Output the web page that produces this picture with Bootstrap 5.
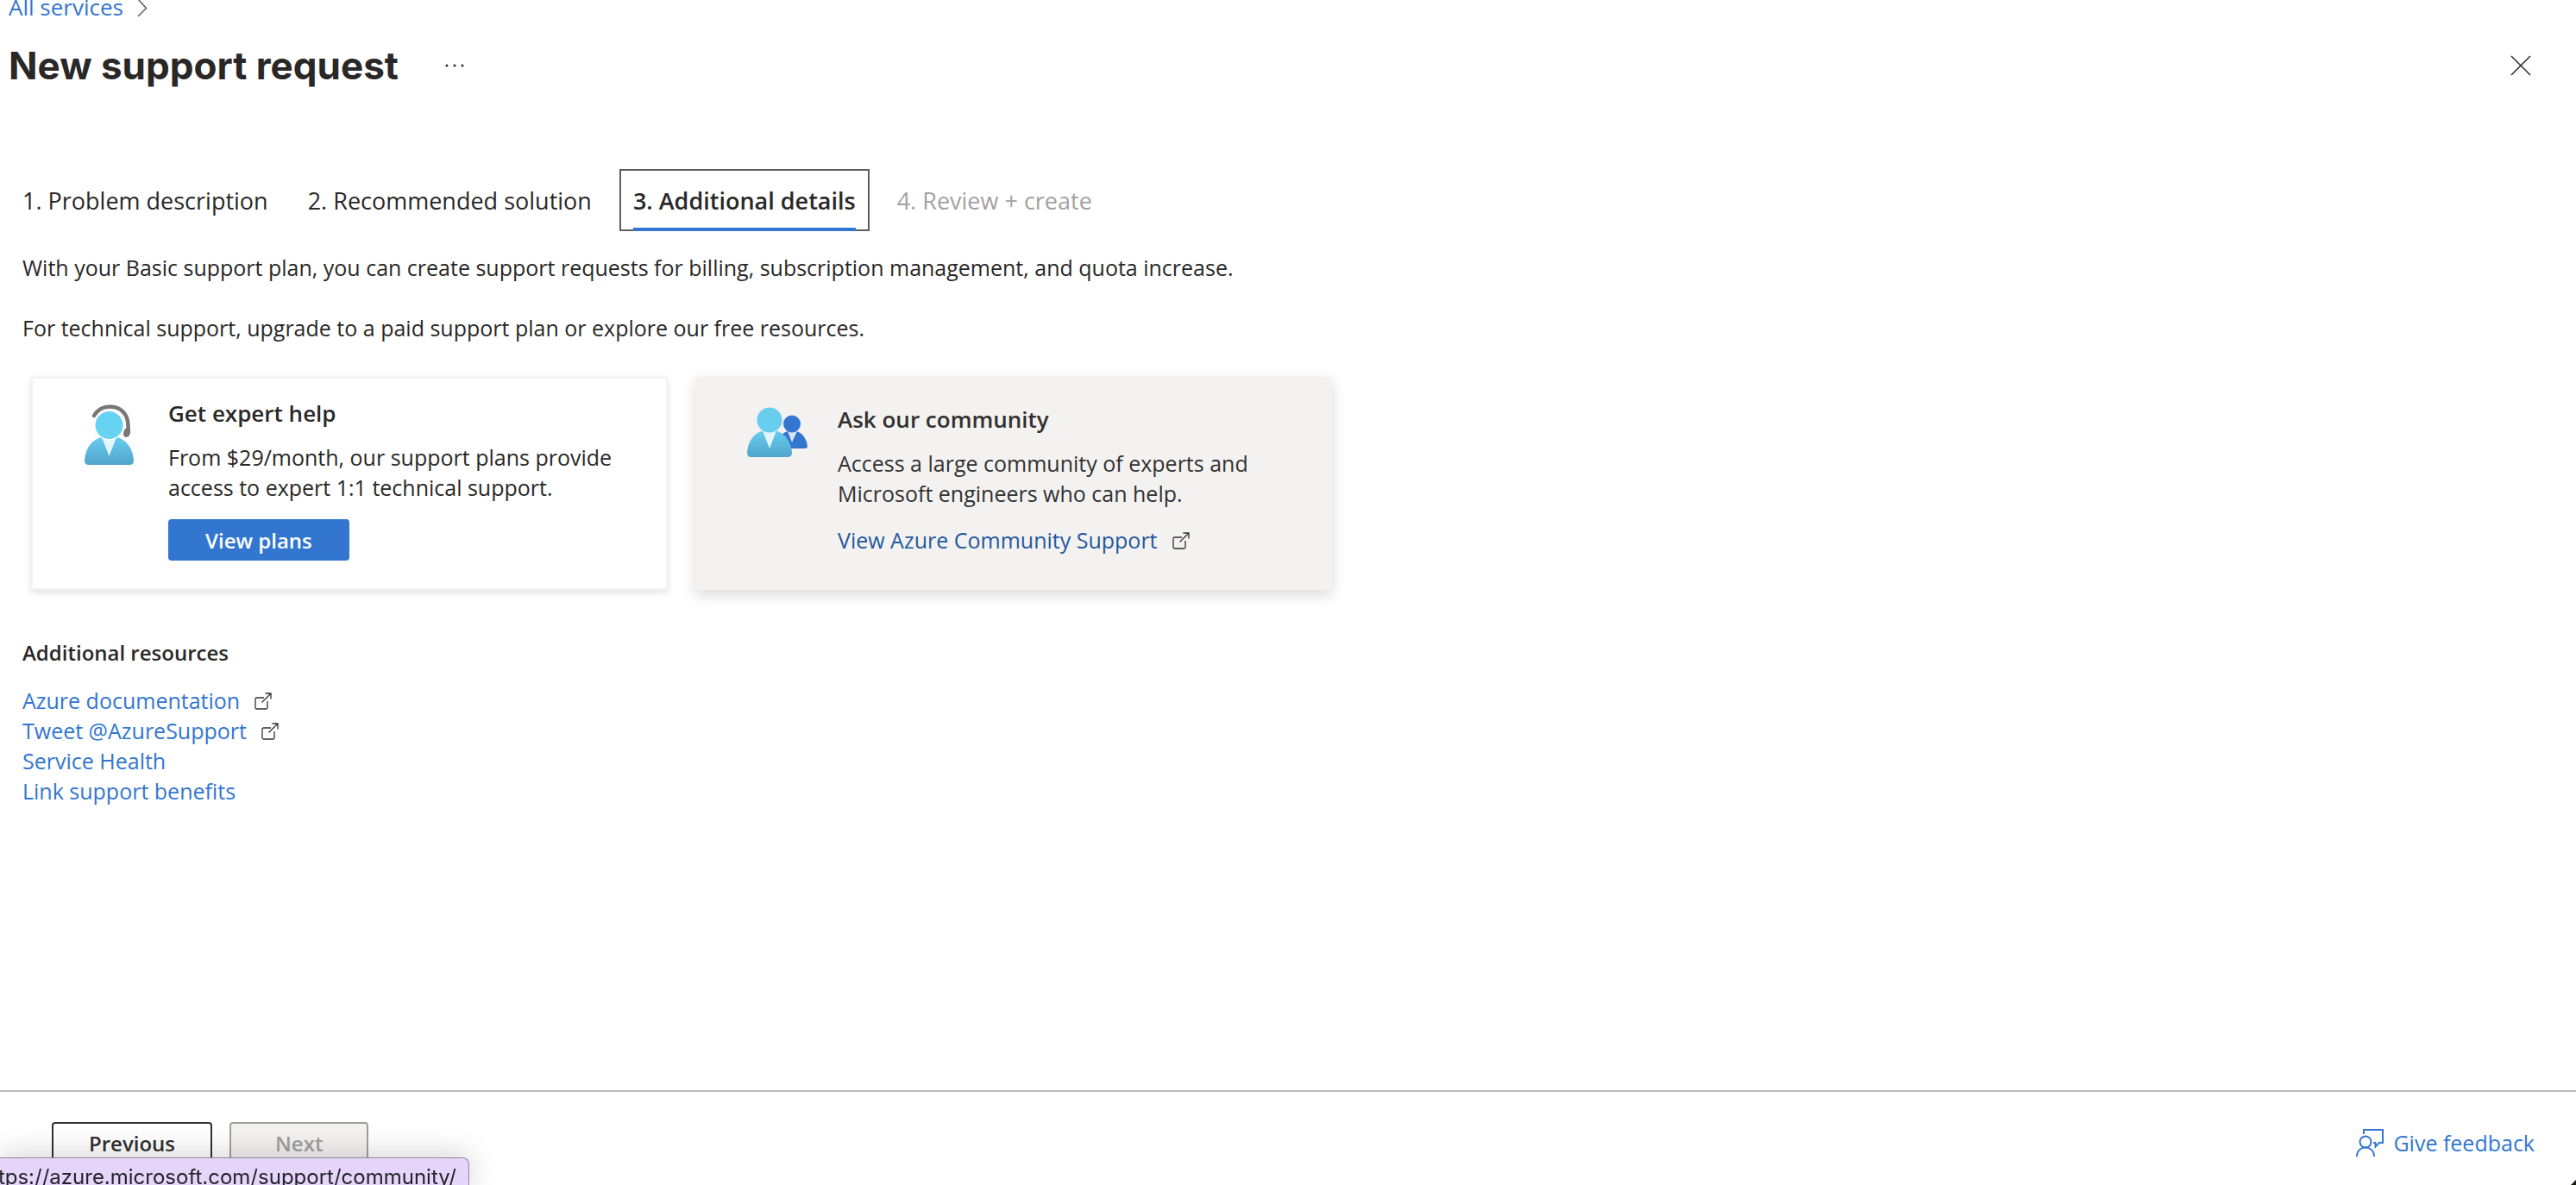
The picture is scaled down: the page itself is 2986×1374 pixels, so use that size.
<!DOCTYPE html>
<html lang="en">
<head>
<meta charset="utf-8">
<meta name="viewport" content="width=device-width, initial-scale=1">
<title>New support request</title>
<link href="https://cdn.jsdelivr.net/npm/bootstrap@5.3.0/dist/css/bootstrap.min.css" rel="stylesheet">
<style>
  :root { --ink: #292827; --azure: #3276d0; --azure-dark: #25589c; }
  body { font-family: "Open Sans", "Noto Sans", sans-serif; font-size: 25px; line-height: 35px; color: var(--ink); background: #fff; }
  a { color: var(--azure); text-decoration: none; }
  svg { display: block; flex: none; }
  .crumbs { height: 26px; padding-left: 10px; overflow: hidden; gap: 16px; font-size: 26px; }
  .page-title { font-family: Inter, "Liberation Sans", sans-serif; font-size: 44px; line-height: 56px; font-weight: 700; margin: 0; }
  .title-bar { padding: 22px 41px 0 10px; gap: 44px; }
  .plain-btn { border: 0; background: none; color: var(--ink); padding: 10px; }
  .steps { padding: 92px 0 0 26px; gap: 18px; }
  .steps .nav-link { position: relative; color: var(--ink); font-size: 27px; line-height: 36px; padding: 17px 12px 15px; border: 2px solid transparent; border-radius: 0; }
  .steps .nav-item:first-child .nav-link { padding-left: 0; border-left: 0; }
  .steps .nav-link.active { font-weight: 600; color: var(--ink); background: none; border-color: #605e5c; padding-left: 14px; padding-right: 14px; }
  .steps .nav-link.active::after { content: ""; position: absolute; left: 14px; right: 14px; bottom: -2px; height: 4px; background: var(--azure); }
  .steps .nav-link.disabled { color: #a3a2a0; }
  .content-area { padding: 25px 26px 0; }
  .intro { margin: 0 0 35px; }
  .offers { gap: 32px; padding: 4px 10px 0; }
  .offer { flex: 0 1 738px; border: 2px solid #f3f2f1; border-radius: 0; box-shadow: 0 3px 8px rgba(0,0,0,.12); display: flex; flex-direction: row; padding: 22px 60px 32px; color: var(--ink); }
  .offer-community { background: #f3f2f1; padding-top: 29px; box-shadow: 0 6px 16px rgba(0,0,0,.15); color: #323130; padding-left: 58px; }
  .offer-icon { width: 97px; flex: none; padding-top: 8px; }
  .offer-community .offer-icon { width: 105px; padding-top: 4px; }
  .offer-heading { font-size: 26px; line-height: 36px; font-weight: 600; margin: 0 0 16px; }
  .offer-text { margin: 0 0 19px; }
  .offer-community a { color: var(--azure-dark); }
  .wide-btn { height: 48px; border-radius: 4px; font-size: 24px; line-height: 35px; font-weight: 600; padding: 0 41px; border: 2px solid var(--azure); }
  .btn-azure, .btn-azure:hover { background: var(--azure); color: #fff; }
  .btn-line, .btn-line:hover { background: #fff; border-color: #323130; color: #323130; }
  .wide-btn:disabled { background: #f3f2f1; border-color: #a19f9d; color: #a19f9d; opacity: 1; padding: 0 51px; }
  .resources-heading { font-size: 24px; line-height: 35px; font-weight: 600; margin: 55px 0 21px; }
  .ext-link { display: flex; align-items: center; gap: 17px; }
  .page-foot { border-top: 2px solid #bbb; padding: 35px 48px 25px 60px; }
  .foot-buttons { gap: 20px; }
  .feedback { gap: 11px; }
  .status-bubble { position: fixed; left: 0; bottom: 0; height: 32px; width: 544px; padding-right: 14px; overflow: hidden; display: flex; justify-content: flex-end; background: #e5d5fb; border: 1px solid #8f8a96; border-left: 0; border-bottom: 0; border-top-right-radius: 8px; font-family: Inter, sans-serif; font-size: 24px; line-height: 44px; color: #242329; white-space: nowrap; box-shadow: 0 0 36px rgba(0,0,0,.22); }
  .pointer-tip { position: fixed; right: 0; bottom: 0; }
</style>
</head>
<body class="d-flex flex-column min-vh-100">
<svg width="0" height="0" class="position-absolute" aria-hidden="true">
  <defs>
    <linearGradient id="sky" x1="0" y1="0" x2="0" y2="1"><stop offset="0" stop-color="#68cdee"/><stop offset="1" stop-color="#50a4cc"/></linearGradient>
    <symbol id="external" viewBox="0 0 20 20"><path d="M11 6H2.5Q1 6 1 7.500V17.500Q1 19 2.500 19H13.500Q15 19 15 17.500V10M8.500 11.500L19 1M12.500 1H19V7.500" fill="none" stroke="#323130" stroke-width="1.300"/></symbol>
  </defs>
</svg>

<header>
  <nav class="crumbs d-flex align-items-end" aria-label="Breadcrumb">
    <a href="#">All services</a>
    <svg width="12" height="26" viewBox="0 0 12 26" fill="none" stroke="#605e5c" stroke-width="1.500"><path d="M1 -1L10.500 9.500L1 19"/></svg>
  </nav>
  <div class="title-bar d-flex align-items-center">
    <h1 class="page-title">New support request</h1>
    <button class="plain-btn" type="button" aria-label="More"><svg width="22" height="6" viewBox="0 0 22 6" fill="currentColor"><circle cx="2" cy="3" r="1.500"/><circle cx="11" cy="3" r="1.500"/><circle cx="20" cy="3" r="1.500"/></svg></button>
    <button class="plain-btn ms-auto" type="button" aria-label="Close"><svg width="26" height="26" viewBox="0 0 26 26" fill="none" stroke="currentColor" stroke-width="1.500"><path d="M2 2L24 24M24 2L2 24"/></svg></button>
  </div>
</header>

<main class="flex-grow-1">
  <ul class="steps nav">
    <li class="nav-item"><a class="nav-link" href="#">1. Problem description</a></li>
    <li class="nav-item"><a class="nav-link" href="#">2. Recommended solution</a></li>
    <li class="nav-item"><a class="nav-link active" aria-current="step" href="#">3. Additional details</a></li>
    <li class="nav-item"><a class="nav-link disabled" aria-disabled="true">4. Review + create</a></li>
  </ul>
  <div class="content-area">
    <p class="intro">With your Basic support plan, you can create support requests for billing, subscription management, and quota increase.</p>
    <p class="intro">For technical support, upgrade to a paid support plan or explore our free resources.</p>
    <div class="offers d-flex">
      <section class="offer card">
        <div class="offer-icon">
          <svg width="57" height="71" viewBox="0 0 57 71"><path d="M0 65C1 51 8 41 20 37.500H37C49 41 56 51 57 65Q57 70 52 70H5Q0 70 0 65Z" fill="url(#sky)"/><path d="M20 38H37L28.500 60Z" fill="#e3f5fc"/><circle cx="28.500" cy="24" r="17.500" fill="#fff"/><circle cx="28.500" cy="24" r="16" fill="#68d2f2"/><path d="M11 13C19-1 40-1 48 13Q51 19 50.500 30" fill="none" stroke="#777" stroke-width="4.500" stroke-linecap="round"/><path d="M47 28H53V32C53 39 45 40 45 34Q45 31 47 28Z" fill="#777"/></svg>
        </div>
        <div>
          <h2 class="offer-heading">Get expert help</h2>
          <p class="offer-text">From $29/month, our support plans provide<br>access to expert 1:1 technical support.</p>
          <button class="btn wide-btn btn-azure" type="button">View plans</button>
        </div>
      </section>
      <section class="offer offer-community card">
        <div class="offer-icon">
          <svg width="70" height="58" viewBox="0 0 70 58"><path d="M36 44C36 36 40 30 47 28H57C65 30 69 38 70 45Q70 48 67 48H36Z" fill="#3276d0"/><path d="M47 28H58L52 41Z" fill="#d7e5f8"/><circle cx="52" cy="19.500" r="10" fill="#3276d0"/><path d="M0 53C1 40 7 31 18 27.500H34C45 31 51 41 52 53Q52 58 47 58H5Q0 58 0 53Z" fill="url(#sky)"/><path d="M18 27.500H34L26 48Z" fill="#e3f5fc"/><circle cx="26" cy="15" r="14.500" fill="#68cdee"/></svg>
        </div>
        <div>
          <h2 class="offer-heading">Ask our community</h2>
          <p class="offer-text">Access a large community of experts and<br>Microsoft engineers who can help.</p>
          <a class="ext-link" href="#">View Azure Community Support <svg width="20" height="20"><use href="#external"/></svg></a>
        </div>
      </section>
    </div>
    <h2 class="resources-heading">Additional resources</h2>
    <ul class="list-unstyled mb-0">
      <li><a class="ext-link" href="#">Azure documentation <svg width="20" height="20"><use href="#external"/></svg></a></li>
      <li><a class="ext-link" href="#">Tweet @AzureSupport <svg width="20" height="20"><use href="#external"/></svg></a></li>
      <li><a href="#">Service Health</a></li>
      <li><a href="#">Link support benefits</a></li>
    </ul>
  </div>
</main>

<footer class="page-foot d-flex justify-content-between">
  <div class="foot-buttons d-flex">
    <button class="btn wide-btn btn-line" type="button">Previous</button>
    <button class="btn wide-btn" type="button" disabled>Next</button>
  </div>
  <a class="feedback d-flex align-items-center" href="#"><svg width="32" height="34" viewBox="0 0 32 34" fill="none" stroke="currentColor" stroke-width="2"><path d="M9 7V2H31V17H27L22.500 21.500V17H20"/><circle cx="11" cy="16" r="6.500"/><path d="M1 33C1 19 21 19 21 33"/></svg>Give feedback</a>
</footer>

<div class="status-bubble">ttps://azure.microsoft.com/support/community/</div>
<svg class="pointer-tip" width="6" height="6" viewBox="0 0 6 6" aria-hidden="true"><path d="M6 0V6H0Z" fill="#1c1a08"/></svg>
<script src="https://cdn.jsdelivr.net/npm/bootstrap@5.3.0/dist/js/bootstrap.bundle.min.js"></script>
</body>
</html>
